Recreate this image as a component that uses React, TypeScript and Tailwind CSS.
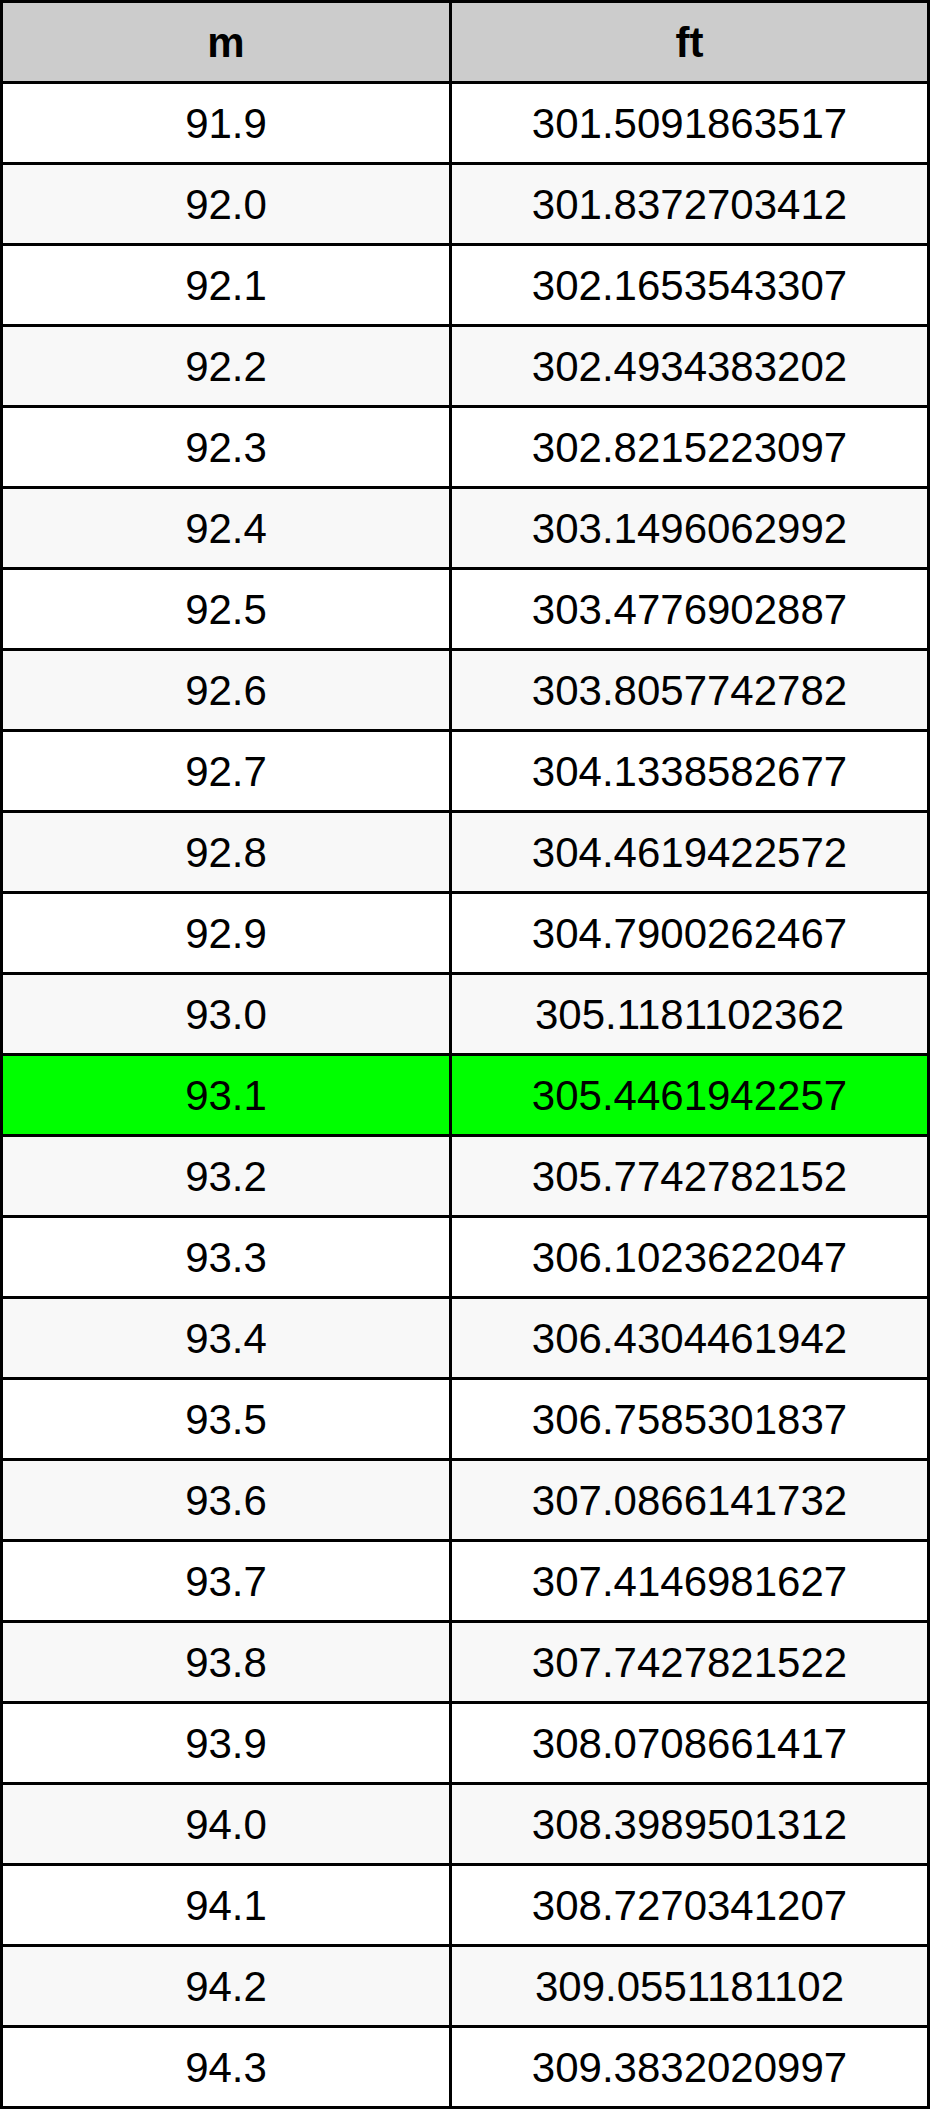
import React from "react";

const rows: [string, string][] = [
  ["91.9", "301.5091863517"],
  ["92.0", "301.8372703412"],
  ["92.1", "302.1653543307"],
  ["92.2", "302.4934383202"],
  ["92.3", "302.8215223097"],
  ["92.4", "303.1496062992"],
  ["92.5", "303.4776902887"],
  ["92.6", "303.8057742782"],
  ["92.7", "304.1338582677"],
  ["92.8", "304.4619422572"],
  ["92.9", "304.7900262467"],
  ["93.0", "305.1181102362"],
  ["93.1", "305.4461942257"],
  ["93.2", "305.7742782152"],
  ["93.3", "306.1023622047"],
  ["93.4", "306.4304461942"],
  ["93.5", "306.7585301837"],
  ["93.6", "307.0866141732"],
  ["93.7", "307.4146981627"],
  ["93.8", "307.7427821522"],
  ["93.9", "308.0708661417"],
  ["94.0", "308.3989501312"],
  ["94.1", "308.7270341207"],
  ["94.2", "309.0551181102"],
  ["94.3", "309.3832020997"],
];

export default function App() {
  return (
    <div className="w-[930px] bg-white font-['Liberation_Sans',Arial,sans-serif] text-black">
      <div className="grid grid-cols-[446px_475px] auto-rows-[78px] gap-[3px] bg-black p-[3px]">
        <div className="flex items-center justify-center bg-[#cccccc] text-[42px] font-bold">m</div>
        <div className="flex items-center justify-center bg-[#cccccc] text-[42px] font-bold">ft</div>
        {rows.map(([m, ft], i) => {
          const bg = m === "93.1" ? "bg-[#00ff00]" : i % 2 === 0 ? "bg-white" : "bg-[#f8f8f8]";
          return (
            <React.Fragment key={m}>
              <div className={`flex items-center justify-center text-[42px] ${bg}`}>{m}</div>
              <div className={`flex items-center justify-center text-[42px] ${bg}`}>{ft}</div>
            </React.Fragment>
          );
        })}
      </div>
    </div>
  );
}
